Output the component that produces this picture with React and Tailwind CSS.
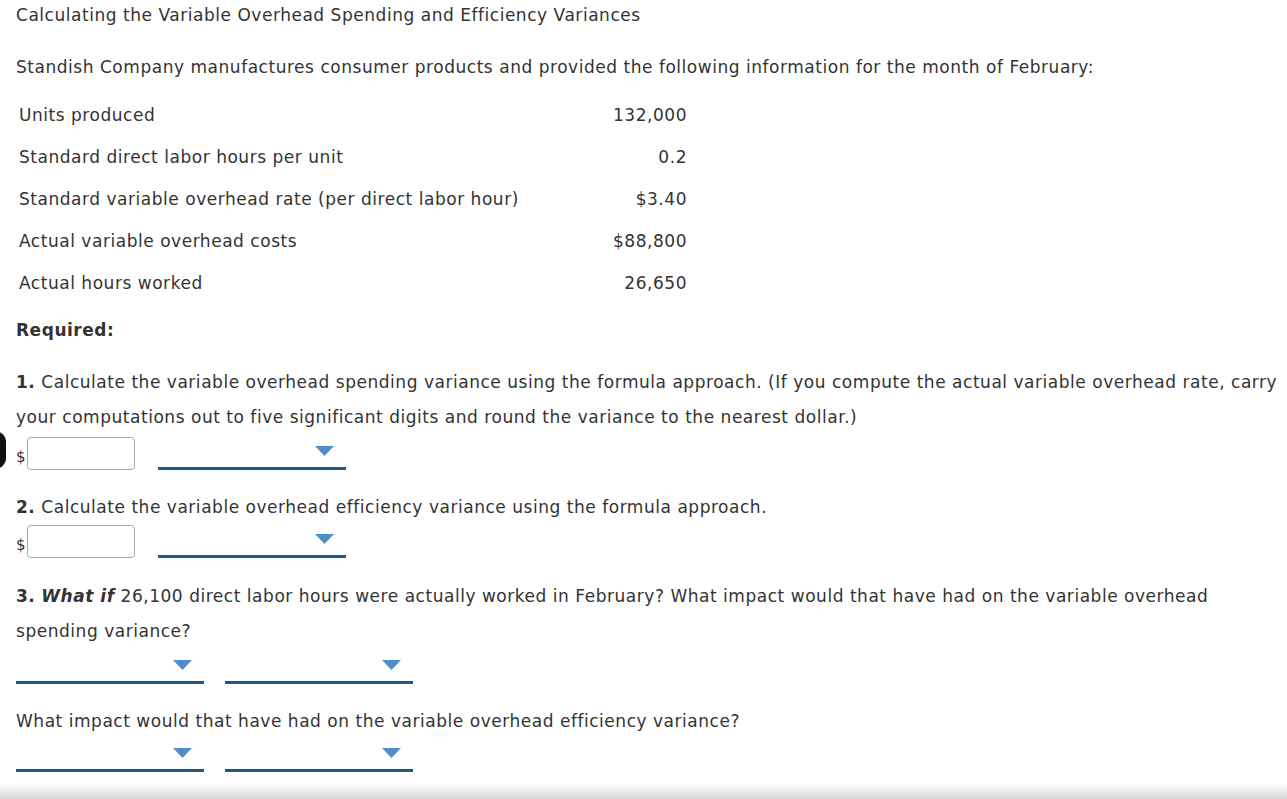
import React from 'react';

const rows = [
  { label: 'Units produced', value: '132,000' },
  { label: 'Standard direct labor hours per unit', value: '0.2' },
  { label: 'Standard variable overhead rate (per direct labor hour)', value: '$3.40' },
  { label: 'Actual variable overhead costs', value: '$88,800' },
  { label: 'Actual hours worked', value: '26,650' },
];

const Dropdown = ({ width = 'w-[188px]' }) => (
  <div className={`relative ${width} h-[30px] border-b-[3px] border-[#1d5a86]`}>
    <svg className="absolute right-[12px] top-[6px]" width="19" height="10" viewBox="0 0 19 10">
      <polygon points="0,0 19,0 9.5,10" fill="#4f8fc9" />
    </svg>
  </div>
);

const MoneyInput = () => (
  <div className="flex items-end">
    <span className="text-[15px] tracking-normal leading-[22px] w-[11px] mb-[2px]">$</span>
    <div className="w-[108px] h-[33px] border border-[#a9a9a9] rounded-[4px] bg-white" />
  </div>
);

const App = () => {
  return (
    <div className="relative h-[799px] flex flex-col bg-white text-[#333] font-['DejaVu_Sans',sans-serif] text-[17px] tracking-[0.53px] overflow-hidden">
      <div className="pl-4 pt-[4px]">
        <p className="leading-[22px]">Calculating the Variable Overhead Spending and Efficiency Variances</p>
        <p className="mt-[30px] leading-[22px]">
          Standish Company manufactures consumer products and provided the following information for the month of February:
        </p>

        <table className="mt-[17px] w-[671px]">
          <tbody>
            {rows.map((row, index) => (
              <tr key={index} className="h-[42px]">
                <td className="pl-[3px]">{row.label}</td>
                <td className="text-right">{row.value}</td>
              </tr>
            ))}
          </tbody>
        </table>

        <p className="mt-[14px] leading-[22px] font-bold">Required:</p>

        <p className="mt-[24px] leading-[35px] whitespace-nowrap">
          <b>1.</b> Calculate the variable overhead spending variance using the formula approach. (If you compute the actual variable overhead rate, carry
          <br />
          your computations out to five significant digits and round the variance to the nearest dollar.)
        </p>
        <div className="mt-[2px] flex items-end gap-[23px]">
          <MoneyInput />
          <Dropdown />
        </div>

        <p className="mt-[20px] leading-[35px]">
          <b>2.</b> Calculate the variable overhead efficiency variance using the formula approach.
        </p>
        <div className="flex items-end gap-[23px]">
          <MoneyInput />
          <Dropdown />
        </div>

        <p className="mt-[21px] leading-[35px] whitespace-nowrap">
          <b>3.</b> <b><i>What if</i></b> 26,100 direct labor hours were actually worked in February? What impact would that have had on the variable overhead
          <br />
          spending variance?
        </p>
        <div className="mt-[5px] flex gap-[21px]">
          <Dropdown />
          <Dropdown />
        </div>

        <p className="mt-[26px] leading-[22px]">What impact would that have had on the variable overhead efficiency variance?</p>
        <div className="mt-[10px] flex gap-[21px]">
          <Dropdown />
          <Dropdown />
        </div>
      </div>

      <div className="mt-auto h-[15px] bg-gradient-to-b from-white to-[#d6d6d6]" />

      <div className="absolute left-[-16px] top-[431px] w-[22px] h-[38px] rounded-full bg-[#111]" />
    </div>
  );
};

export default App;
